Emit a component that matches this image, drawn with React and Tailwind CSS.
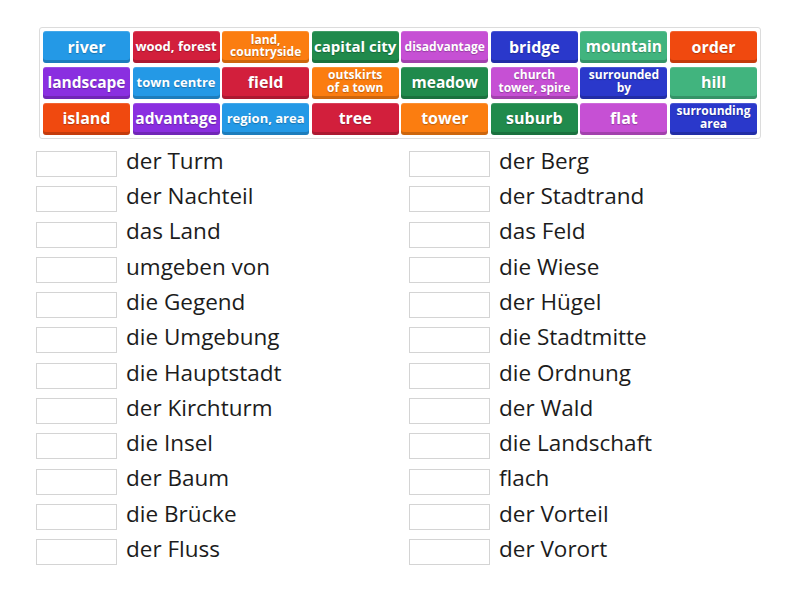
import React from 'react';

const tiles = [
  { label: 'river', color: 'blue', size: 'text-[16px]' },
  { label: 'wood, forest', color: 'red', size: 'text-[13px]' },
  { label: ['land,', 'countryside'], color: 'orange' },
  { label: 'capital city', color: 'green', size: 'text-[15px]' },
  { label: 'disadvantage', color: 'violet', size: 'text-[12px]' },
  { label: 'bridge', color: 'navy', size: 'text-[16px]' },
  { label: 'mountain', color: 'mint', size: 'text-[15.5px]' },
  { label: 'order', color: 'tomato', size: 'text-[16px]' },

  { label: 'landscape', color: 'purple', size: 'text-[15.5px]' },
  { label: 'town centre', color: 'blue', size: 'text-[13px]' },
  { label: 'field', color: 'red', size: 'text-[16px]' },
  { label: ['outskirts', 'of a town'], color: 'orange' },
  { label: 'meadow', color: 'green', size: 'text-[15.5px]' },
  { label: ['church', 'tower, spire'], color: 'violet' },
  { label: ['surrounded', 'by'], color: 'navy' },
  { label: 'hill', color: 'mint', size: 'text-[16px]' },

  { label: 'island', color: 'tomato', size: 'text-[16px]' },
  { label: 'advantage', color: 'purple', size: 'text-[15.5px]' },
  { label: 'region, area', color: 'blue', size: 'text-[13px]' },
  { label: 'tree', color: 'red', size: 'text-[16px]' },
  { label: 'tower', color: 'orange', size: 'text-[16px]' },
  { label: 'suburb', color: 'green', size: 'text-[16px]' },
  { label: 'flat', color: 'violet', size: 'text-[16px]' },
  { label: ['surrounding', 'area'], color: 'navy' },
];

const colorClass = {
  blue: 'bg-[#2499e6]',
  red: 'bg-[#d21f3c]',
  orange: 'bg-[#fb7d10]',
  green: 'bg-[#208a4c]',
  violet: 'bg-[#c650d4]',
  navy: 'bg-[#2a38cb]',
  mint: 'bg-[#41b47e]',
  tomato: 'bg-[#f0490f]',
  purple: 'bg-[#8a2fe0]',
};

const leftWords = [
  'der Turm', 'der Nachteil', 'das Land', 'umgeben von', 'die Gegend', 'die Umgebung',
  'die Hauptstadt', 'der Kirchturm', 'die Insel', 'der Baum', 'die Brücke', 'der Fluss',
];

const rightWords = [
  'der Berg', 'der Stadtrand', 'das Feld', 'die Wiese', 'der Hügel', 'die Stadtmitte',
  'die Ordnung', 'der Wald', 'die Landschaft', 'flach', 'der Vorteil', 'der Vorort',
];

const Tile = ({ label, color, size }) => {
  const two = Array.isArray(label);
  return (
    <div
      className={`${colorClass[color]} rounded-[3px] flex items-center justify-center text-center text-white font-bold whitespace-nowrap shadow-[inset_0_-3px_0_rgba(0,0,0,0.18),inset_0_1px_0_rgba(255,255,255,0.15)] [text-shadow:0_1px_1px_rgba(0,0,0,0.25)] ${two ? 'text-[12px] leading-[12.5px] pb-[2px]' : `${size} leading-none pb-[1px]`}`}
    >
      {two ? (
        <span>
          {label[0]}
          <br />
          {label[1]}
        </span>
      ) : (
        label
      )}
    </div>
  );
};

const WordColumn = ({ words }) => (
  <div className="flex flex-col gap-[9.3px]">
    {words.map((w) => (
      <div key={w} className="flex items-center h-[26px]">
        <div className="w-[81px] h-[26px] border border-[#d4d4d4] bg-white shrink-0" />
        <span className="ml-[9px] mb-[6px] text-[22.5px] text-[#1c1c1c] leading-none whitespace-nowrap">{w}</span>
      </div>
    ))}
  </div>
);

export default function App() {
  return (
    <div className="w-[800px] h-[600px] bg-white overflow-hidden font-['Open_Sans',sans-serif]">
      <div className="ml-[39px] mt-[27px] w-[722px] h-[112px] border border-[#dcdcdc] rounded-[3px] p-[3px]">
        <div className="grid grid-cols-8 grid-rows-3 gap-x-[2.6px] gap-y-[3.5px] h-full">
          {tiles.map((t) => (
            <Tile key={Array.isArray(t.label) ? t.label.join(' ') : t.label} {...t} />
          ))}
        </div>
      </div>

      <div className="flex mt-[12px]">
        <div className="ml-[36px] w-[373px]">
          <WordColumn words={leftWords} />
        </div>
        <div>
          <WordColumn words={rightWords} />
        </div>
      </div>
    </div>
  );
}
